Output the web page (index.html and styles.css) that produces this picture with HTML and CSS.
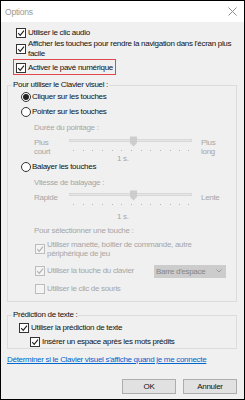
FILE: index.html
```html
<!DOCTYPE html>
<html lang="fr">
<head>
<meta charset="utf-8">
<title>Options</title>
<link rel="stylesheet" href="styles.css">
</head>
<body>
<div class="window">
  <div class="titlebar">
    <span class="title">Options</span>
    <svg class="close" width="9" height="9" viewBox="0 0 9 9"><path d="M0.5 0.5L8.5 8.5M8.5 0.5L0.5 8.5" stroke="#8c8c8c" stroke-width="1" fill="none"/></svg>
  </div>
  <div class="content">
    <div class="cb row-top r1"><span class="box"><svg viewBox="0 0 8 8"><path d="M1.2 4.2L3.2 6.3L7 1.6" /></svg></span><span class="lbl">Utiliser le clic audio</span></div>
    <div class="cb row-top r2"><span class="box"><svg viewBox="0 0 8 8"><path d="M1.2 4.2L3.2 6.3L7 1.6" /></svg></span><span class="lbl">Afficher les touches pour rendre la navigation dans l'écran plus<br>facile</span></div>
    <div class="highlight"><div class="cb"><span class="box"><svg viewBox="0 0 8 8"><path d="M1.2 4.2L3.2 6.3L7 1.6" /></svg></span><span class="lbl">Activer le pavé numérique</span></div></div>

    <fieldset class="group g1">
      <legend>Pour utiliser le Clavier visuel :</legend>
      <div class="rb rb1"><span class="radio on"></span><span class="lbl">Cliquer sur les touches</span></div>
      <div class="rb rb2"><span class="radio"></span><span class="lbl">Pointer sur les touches</span></div>
      <div class="dis sub durée">Durée du pointage :</div>
      <div class="slider s1">
        <div class="sl-left two">Plus<br>court</div>
        <svg class="track" width="123" height="20" viewBox="0 0 123 20">
          <rect x="0.5" y="3.5" width="122" height="2" fill="#e6e6e6" stroke="#d8d8d8"/>
          <path d="M61 0.5h7v6.5l-3.5 3.5l-3.5-3.5z" fill="#cdcdcd"/>
          <g fill="#b4b4b4">
            <rect x="4" y="14" width="1" height="1"/><rect x="14" y="14" width="1" height="1"/><rect x="23" y="14" width="1" height="1"/><rect x="33" y="14" width="1" height="1"/><rect x="43" y="14" width="1" height="1"/><rect x="52" y="14" width="1" height="1"/><rect x="62" y="14" width="1" height="1"/><rect x="72" y="14" width="1" height="1"/><rect x="81" y="14" width="1" height="1"/><rect x="91" y="14" width="1" height="1"/><rect x="101" y="14" width="1" height="1"/><rect x="110" y="14" width="1" height="1"/><rect x="119" y="14" width="1" height="1"/>
          </g>
        </svg>
        <div class="sl-right two">Plus<br>long</div>
      </div>
      <div class="dis secs secs1">1 s.</div>
      <div class="rb rb3"><span class="radio"></span><span class="lbl">Balayer les touches</span></div>
      <div class="dis sub vitesse">Vitesse de balayage :</div>
      <div class="slider s2">
        <div class="sl-left one">Rapide</div>
        <svg class="track" width="123" height="20" viewBox="0 0 123 20">
          <rect x="0.5" y="3.5" width="122" height="2" fill="#e6e6e6" stroke="#d8d8d8"/>
          <path d="M61 0.5h7v6.5l-3.5 3.5l-3.5-3.5z" fill="#cdcdcd"/>
          <g fill="#b4b4b4">
            <rect x="4" y="14" width="1" height="1"/><rect x="14" y="14" width="1" height="1"/><rect x="23" y="14" width="1" height="1"/><rect x="33" y="14" width="1" height="1"/><rect x="43" y="14" width="1" height="1"/><rect x="52" y="14" width="1" height="1"/><rect x="62" y="14" width="1" height="1"/><rect x="72" y="14" width="1" height="1"/><rect x="81" y="14" width="1" height="1"/><rect x="91" y="14" width="1" height="1"/><rect x="101" y="14" width="1" height="1"/><rect x="110" y="14" width="1" height="1"/><rect x="119" y="14" width="1" height="1"/>
          </g>
        </svg>
        <div class="sl-right one">Lente</div>
      </div>
      <div class="dis secs secs2">1 s.</div>
      <div class="dis sub pour">Pour sélectionner une touche :</div>
      <div class="cb disabled d1"><span class="box"><svg viewBox="0 0 8 8"><path d="M1.2 4.2L3.2 6.3L7 1.6" /></svg></span><span class="lbl">Utiliser manette, boîtier de commande, autre<br>périphérique de jeu</span></div>
      <div class="cb disabled d2"><span class="box"><svg viewBox="0 0 8 8"><path d="M1.2 4.2L3.2 6.3L7 1.6" /></svg></span><span class="lbl">Utiliser la touche du clavier</span>
        <div class="select"><span>Barre d'espace</span><svg width="6" height="4" viewBox="0 0 6 4"><path d="M0.5 0.5L3 3L5.5 0.5" stroke="#9a9a9a" fill="none"/></svg></div>
      </div>
      <div class="cb disabled d3"><span class="box empty"></span><span class="lbl">Utiliser le clic de souris</span></div>
    </fieldset>

    <fieldset class="group g2">
      <legend>Prédiction de texte :</legend>
      <div class="cb p1"><span class="box"><svg viewBox="0 0 8 8"><path d="M1.2 4.2L3.2 6.3L7 1.6" /></svg></span><span class="lbl">Utiliser la prédiction de texte</span></div>
      <div class="cb p2"><span class="box"><svg viewBox="0 0 8 8"><path d="M1.2 4.2L3.2 6.3L7 1.6" /></svg></span><span class="lbl">Insérer un espace après les mots prédits</span></div>
    </fieldset>

    <a class="link" href="#">Déterminer si le Clavier visuel s'affiche quand je me connecte</a>

    <div class="buttons">
      <button class="btn">OK</button>
      <button class="btn">Annuler</button>
    </div>
  </div>
</div>
</body>
</html>
```

FILE: styles.css
```css
* { box-sizing: border-box; }
body { margin: 0; background: #ffffff; }

.window {
  width: 245px;
  height: 400px;
  border: 1px solid #000;
  background: #f0f0f0;
  font-family: "Liberation Sans", Arial, sans-serif;
  font-size: 8px;
  letter-spacing: -0.3px;
  color: #111;
  display: flex;
  flex-direction: column;
  overflow: hidden;
}

.titlebar {
  height: 21px;
  flex: none;
  background: #fff;
  display: flex;
  align-items: center;
  justify-content: space-between;
  padding: 0 7px 0 4px;
}
.title { font-size: 8.5px; letter-spacing: -0.2px; color: #999; }
.close { display: block; }

.content { display: flex; flex-direction: column; align-items: flex-start; }

.lbl { line-height: 10px; }

/* checkbox */
.cb { display: flex; align-items: center; gap: 2px; }
.box {
  width: 10px; height: 10px; flex: none;
  border: 1px solid #333;
  background: #fff;
  display: flex; align-items: center; justify-content: center;
}
.box svg { width: 8px; height: 8px; display: block; }
.box svg path { stroke: #222; stroke-width: 1.1; fill: none; }

.disabled { color: #a6a6a6; }
.disabled .box { border-color: #bdbdbd; background: #f4f4f4; }
.disabled .box svg path { stroke: #b0b0b0; }

.r1 { margin: 6px 0 0 15px; }
.r2 { margin: 1px 0 0 15px; }
.highlight {
  margin: 0 0 0 12px;
  border: 1px solid #e2474e;
  padding: 3px 2px 1px 2px;
}

/* group boxes */
.group {
  margin: 5px 0 0 6px;
  width: 230px;
  border: 1px solid #dcdcdc;
  padding: 0 0 7px 4px;
  min-inline-size: 0;
  display: flex;
  flex-direction: column;
  align-items: stretch;
}
.group legend { padding: 0 1px; line-height: 10px; color: #111; }
.g2 { margin-top: 8px; padding-bottom: 1px; }

/* radio */
.rb { display: flex; align-items: center; gap: 1px; margin-left: 9px; height: 10px; }
.radio {
  width: 10px; height: 10px; flex: none;
  border: 1px solid #333;
  border-radius: 50%;
  background: #fff;
  display: flex; align-items: center; justify-content: center;
}
.radio.on::after {
  content: "";
  width: 6px; height: 6px;
  border-radius: 50%;
  background: #222;
}
.rb1 { margin-top: 2px; }
.rb2 { margin-top: 5px; }
.rb3 { margin-top: 0; }

.dis { color: #a6a6a6; }
.sub { margin-left: 22px; line-height: 10px; }
.durée { margin-top: 6px; }
.vitesse { margin-top: 6px; }
.pour { margin-top: 4px; }

/* sliders */
.slider { display: flex; margin-left: 22px; height: 20px; color: #a6a6a6; }
.sl-left { width: 35px; flex: none; }
.sl-right { margin-left: 9px; }
.track { display: block; flex: none; }
.two { line-height: 9px; padding-top: 2px; }
.one { line-height: 10px; padding-top: 3px; }
.s1 { margin-top: 3px; }
.s2 { margin-top: 2px; }

.secs { margin-left: 105px; }
.secs1 { line-height: 6px; height: 6px; }
.secs2 { line-height: 10px; margin-top: 2px; }

.d1 { margin: 4px 0 0 23px; }
.d1 .lbl { line-height: 9px; }
.d2 { margin: 6px 10px 0 23px; height: 14px; }
.d3 { margin: 6px 0 0 23px; }

.select {
  margin-left: auto;
  width: 72px; height: 13px;
  background: #cccccc;
  color: #858585;
  display: flex; align-items: center; justify-content: space-between;
  padding: 0 4px 0 2px;
}
.select svg { display: block; }

.p1 { margin: 3px 0 0 7px; }
.p2 { margin: 4px 0 0 18px; }

.link {
  margin: 6px 0 0 6px;
  line-height: 10px;
  color: #0066cc;
  text-decoration: underline;
}

.buttons {
  align-self: stretch;
  display: flex;
  justify-content: flex-end;
  gap: 7px;
  margin-top: 14px;
  padding-right: 7px;
}
.btn {
  width: 54px; height: 15px;
  border: 1px solid #adadad;
  background: #e1e1e1;
  font-family: "Liberation Sans", Arial, sans-serif;
  font-size: 8px;
  letter-spacing: -0.3px;
  color: #111;
  padding: 0;
  margin: 0;
}
```
